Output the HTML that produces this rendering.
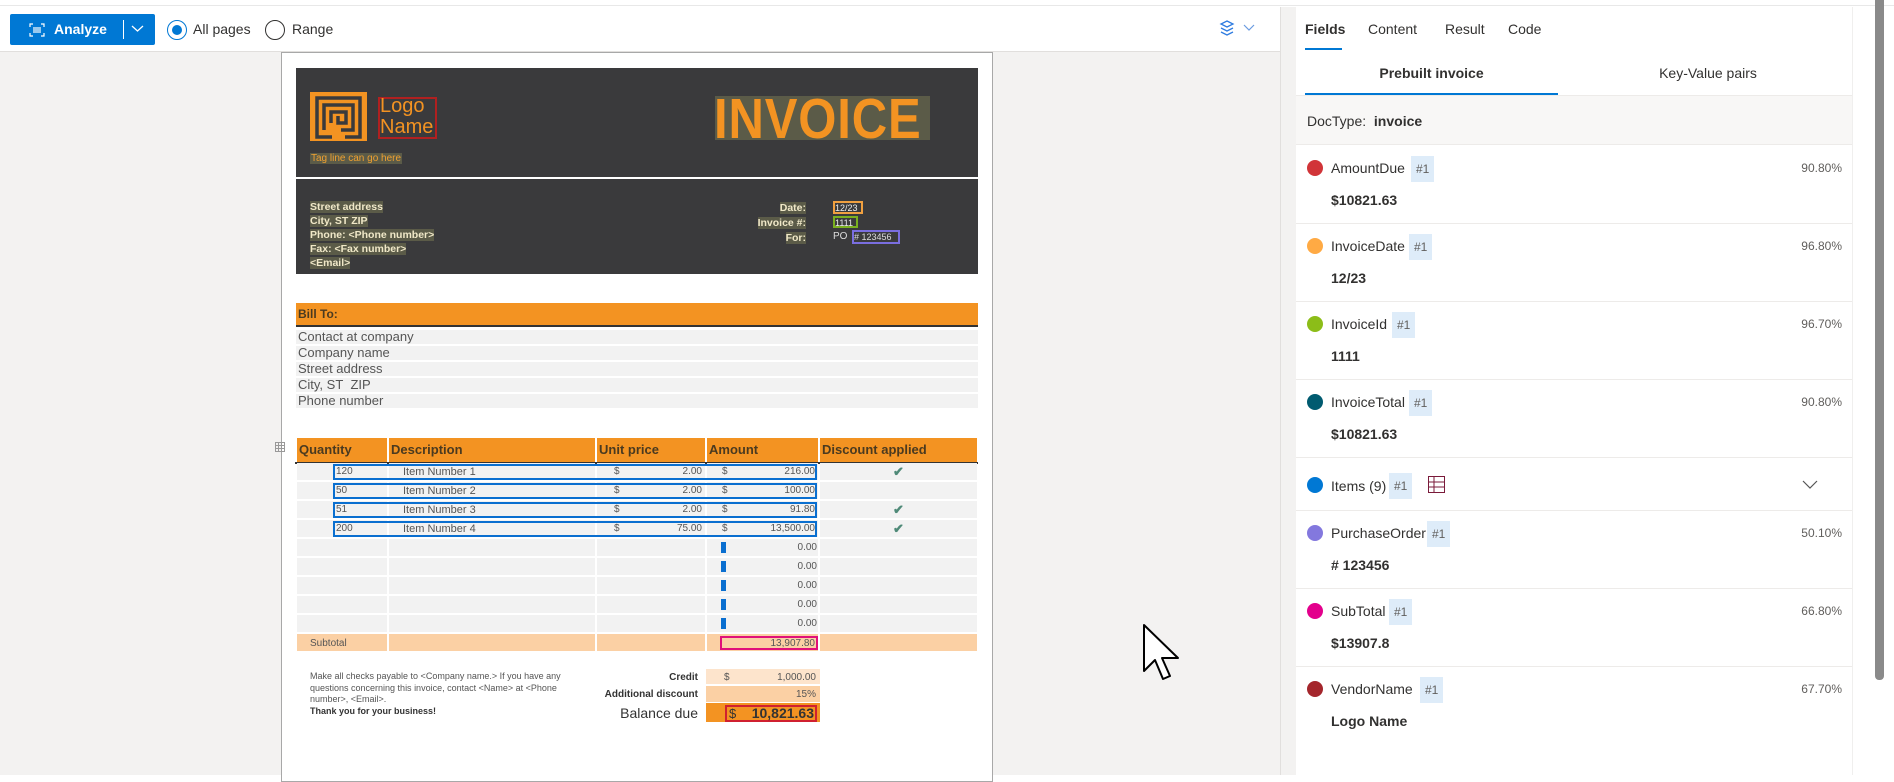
<!DOCTYPE html>
<html><head><meta charset="utf-8"><style>
*{margin:0;padding:0;box-sizing:border-box}
body{width:1894px;height:775px;overflow:hidden;background:#fff;font-family:"Liberation Sans",sans-serif;position:relative;color:#323130}
.a{position:absolute}
.hl{background:#5b5b48;color:#f0e8c8}
.cell{position:absolute;background:#f2f2f2;height:17px}
.hc{position:absolute;background:#f39322;height:24px;top:438px;font-weight:bold;font-size:13px;color:#4a3a20;padding:4px 2px}
.bx{position:absolute;border:2px solid #0a6fd0}
.tx{position:absolute;font-size:10px;color:#555}
.row{position:absolute;left:1296px;width:556px;border-bottom:1px solid #edebe9}
.dot{position:absolute;left:11px;width:16px;height:16px;border-radius:50%}
.nm{position:absolute;left:35px;font-size:14px;color:#323130}
.bd{position:absolute;background:#deecf9;font-size:12px;color:#605e5c;height:26px;line-height:26px;padding:0 5px}
.pc{position:absolute;right:10px;font-size:12px;color:#605e5c}
.vl{position:absolute;left:35px;font-size:14px;font-weight:bold;color:#323130}
</style></head><body>
<div class="a" style="left:0;top:0;width:1894px;height:6px;background:#fff;border-bottom:1px solid #e8e8e8"></div>
<div class="a" style="left:0;top:51px;width:1280px;height:724px;background:#f3f2f1;border-top:1px solid #e1dfdd"></div>
<div class="a" style="left:10px;top:14px;width:145px;height:31px;background:#0078d4;border-radius:2px;color:#fff;font-weight:bold;font-size:14px">
 <svg class="a" style="left:19px;top:9px" width="16" height="14" viewBox="0 0 16 14" fill="none" stroke="#fff" stroke-width="1.2"><path d="M1 4V1h3M12 1h3v3M15 10v3h-3M4 13H1v-3M5 4v6M7 4v6M9 4v6M11 4v6"/></svg>
 <span class="a" style="left:44px;top:7px">Analyze</span>
 <div class="a" style="left:113px;top:6px;width:1px;height:19px;background:#fff"></div>
 <svg class="a" style="left:121px;top:10px" width="13" height="9" viewBox="0 0 13 9"><path d="M1 2l5.5 5L12 2" stroke="#fff" fill="none" stroke-width="1.3"/></svg>
</div>
<div class="a" style="left:167px;top:20px;width:20px;height:20px;border:1.5px solid #0078d4;border-radius:50%"></div>
<div class="a" style="left:172px;top:25px;width:10px;height:10px;background:#0078d4;border-radius:50%"></div>
<div class="a" style="left:193px;top:21px;font-size:14px">All pages</div>
<div class="a" style="left:265px;top:20px;width:20px;height:20px;border:1.5px solid #323130;border-radius:50%"></div>
<div class="a" style="left:292px;top:21px;font-size:14px">Range</div>
<svg class="a" style="left:1219px;top:20px" width="16" height="17" viewBox="0 0 16 17" fill="none" stroke="#2f7ce0" stroke-width="1.3"><path d="M8 1l6 3-6 3-6-3z M2 8l6 3 6-3 M2 12l6 3 6-3"/></svg>
<svg class="a" style="left:1243px;top:24px" width="12" height="8" viewBox="0 0 12 8"><path d="M1 1l5 5 5-5" stroke="#6a9be0" fill="none" stroke-width="1.2"/></svg>

<div class="a" style="left:281px;top:52px;width:712px;height:730px;background:#fff;border:1px solid #a8a8a8"></div>
<div class="a" style="left:296px;top:68px;width:682px;height:109px;background:#3a3a3c"></div>
<div class="a" style="left:296px;top:179px;width:682px;height:95px;background:#3a3a3c"></div>
<div class="a" style="left:310px;top:92px;width:57px;height:49px;background:#f39322"></div>
<svg class="a" style="left:310px;top:92px" width="57" height="49" viewBox="0 0 57 49" fill="none" stroke="#3a3a3c" stroke-width="3.5"><path d="M22 45H7V6h43v39H35M14 38V13h29v25H31M21 31V20h15v11H28V24"/></svg>
<div class="a" style="left:378px;top:97px;width:59px;height:42px;border:2px solid #b02020"></div>
<div class="a" style="left:380px;top:96px;font-size:20px;color:#f39322;line-height:21px">Logo<br>Name</div>
<div class="a hl" style="left:310px;top:153px;font-size:10px;color:#f0a030;padding:0 1px">Tag line can go here</div>
<div class="a hl" style="left:715px;top:96px;width:215px;height:44px"></div>
<div class="a" style="left:714px;top:86px;font-size:57px;font-weight:bold;color:#f39322;transform:scaleX(0.86);transform-origin:left;letter-spacing:1px">INVOICE</div>
<div class="a" style="left:310px;top:200px;font-size:10.5px;font-weight:bold;color:#f0ecd8;line-height:14px">
<span class="hl">Street address</span><br><span class="hl">City, ST ZIP</span><br><span class="hl">Phone: &lt;Phone number&gt;</span><br><span class="hl">Fax: &lt;Fax number&gt;</span><br><span class="hl">&lt;Email&gt;</span></div>
<div class="a" style="left:720px;top:201px;width:86px;text-align:right;font-size:10.5px;font-weight:bold;color:#f0ecd8;line-height:15px"><span class="hl">Date:</span><br><span class="hl">Invoice #:</span><br><span class="hl">For:</span></div>
<div class="a" style="left:833px;top:201px;width:30px;height:13px;border:2px solid #f0a040;font-size:9px;color:#eee">12/23</div>
<div class="a" style="left:833px;top:216px;width:25px;height:12px;border:2px solid #7ab020;font-size:9px;color:#eee">1111</div>
<div class="a" style="left:833px;top:231px;font-size:10px;color:#ddd">PO</div>
<div class="a" style="left:852px;top:230px;width:48px;height:14px;border:2px solid #7a6ee0;font-size:9px;color:#ddd">#&nbsp;123456</div>

<div class="a" style="left:296px;top:303px;width:682px;height:24px;background:#f39322;border-bottom:2px solid #333"></div>
<div class="a" style="left:298px;top:307px;font-size:12px;font-weight:bold;color:#4a3a20">Bill To:</div>
<div class="cell" style="left:296px;top:330px;width:682px;height:14px"></div>
<div class="cell" style="left:296px;top:346px;width:682px;height:14px"></div>
<div class="cell" style="left:296px;top:362px;width:682px;height:14px"></div>
<div class="cell" style="left:296px;top:378px;width:682px;height:14px"></div>
<div class="cell" style="left:296px;top:394px;width:682px;height:14px"></div>
<div class="a" style="left:298px;top:329px;font-size:13px;color:#555;line-height:16px">Contact at company<br>Company name<br>Street address<br>City, ST&nbsp; ZIP<br>Phone number</div>

<svg class="a" style="left:275px;top:442px" width="10" height="10"><path d="M0.5 .5h9v9h-9zM0.5 3.5h9M0.5 6.5h9M3.5 .5v9M6.5 .5v9" stroke="#999" fill="none"/></svg>
<div class="hc" style="left:297px;width:90px">Quantity</div>
<div class="hc" style="left:389px;width:206px">Description</div>
<div class="hc" style="left:597px;width:108px">Unit price</div>
<div class="hc" style="left:707px;width:111px">Amount</div>
<div class="hc" style="left:820px;width:157px">Discount applied</div>
<div class="a" style="left:295px;top:462px;width:683px;height:2px;background:#333"></div>
<div id="rows"></div>
<script>
var ys=[463,482,501,520,539,558,577,596,615];var cols=[[297,90],[389,206],[597,108],[707,111],[820,157]];var h='';
ys.forEach(function(y){cols.forEach(function(c){h+='<div class="cell" style="left:'+c[0]+'px;top:'+y+'px;width:'+c[1]+'px"></div>'})});
cols.forEach(function(c){h+='<div class="cell" style="left:'+c[0]+'px;top:634px;width:'+c[1]+'px;background:#fbd0a4"></div>'});
var d=[['120','Item Number 1','2.00','216.00',1],['50','Item Number 2','2.00','100.00',0],['51','Item Number 3','2.00','91.80',1],['200','Item Number 4','75.00','13,500.00',1]];
d.forEach(function(r,i){var y=ys[i];h+='<div class="bx" style="left:333px;top:'+(y+1)+'px;width:484px;height:16px"></div>';
h+='<div class="tx" style="left:336px;top:'+(y+3)+'px">'+r[0]+'</div><div class="tx" style="left:403px;top:'+(y+3)+'px;font-size:11px">'+r[1]+'</div><div class="tx" style="left:614px;top:'+(y+3)+'px">$</div><div class="tx" style="left:640px;top:'+(y+3)+'px;width:62px;text-align:right">'+r[2]+'</div><div class="tx" style="left:722px;top:'+(y+3)+'px">$</div><div class="tx" style="left:735px;top:'+(y+3)+'px;width:80px;text-align:right">'+r[3]+'</div>';
if(r[4])h+='<div class="a" style="left:893px;top:'+(y+1)+'px;font-size:13px;color:#4f8a78;font-weight:bold">✔</div>';});
for(var i=4;i<9;i++){var y=ys[i];h+='<div class="a" style="left:721px;top:'+(y+3)+'px;width:5px;height:11px;background:#0a6fd0"></div><div class="tx" style="left:735px;top:'+(y+3)+'px;width:82px;text-align:right">0.00</div>'}
h+='<div class="tx" style="left:310px;top:638px">Subtotal</div><div class="a" style="left:720px;top:636px;width:98px;height:14px;border:2px solid #e0107a"></div><div class="tx" style="left:735px;top:638px;width:80px;text-align:right">13,907.80</div>';
document.getElementById('rows').innerHTML=h;
</script>
<div class="a" style="left:310px;top:671px;font-size:9px;color:#555;line-height:11.5px;width:272px">Make all checks payable to &lt;Company name.&gt; If you have any questions concerning this invoice, contact &lt;Name&gt; at &lt;Phone number&gt;, &lt;Email&gt;.<br><b style="color:#333">Thank you for your business!</b></div>
<div class="a" style="left:600px;top:672px;width:98px;text-align:right;font-size:10px;font-weight:bold;color:#333">Credit</div>
<div class="a" style="left:706px;top:669px;width:114px;height:15px;background:#fde4cc"></div>
<div class="tx" style="left:724px;top:672px">$</div><div class="tx" style="left:740px;top:672px;width:76px;text-align:right">1,000.00</div>
<div class="a" style="left:580px;top:689px;width:118px;text-align:right;font-size:10px;font-weight:bold;color:#333">Additional discount</div>
<div class="a" style="left:706px;top:686px;width:114px;height:16px;background:#fbd0a4"></div>
<div class="tx" style="left:740px;top:689px;width:76px;text-align:right">15%</div>
<div class="a" style="left:600px;top:705px;width:98px;text-align:right;font-size:14px;color:#333">Balance due</div>
<div class="a" style="left:706px;top:703px;width:114px;height:19px;background:#f39322"></div>
<div class="a" style="left:725px;top:705px;width:92px;height:17px;border:2px solid #d02030"></div>
<div class="a" style="left:729px;top:706px;font-size:13px;color:#333">$</div>
<div class="a" style="left:740px;top:705px;width:74px;text-align:right;font-size:14px;font-weight:bold;color:#333">10,821.63</div>

<svg class="a" style="left:1142px;top:623px" width="40" height="60" viewBox="0 0 40 60"><path d="M2 2v46l11-11 8 19 7-3-8-18h16z" fill="#fff" stroke="#000" stroke-width="2" stroke-linejoin="round"/></svg>

<div class="a" style="left:1280px;top:7px;width:16px;height:768px;background:#f3f2f1;border-left:1px solid #e1dfdd"></div>
<div class="a" style="left:1852px;top:7px;width:42px;height:768px;background:#fff;border-left:1px solid #f0efee"></div>
<div class="a" style="left:1875px;top:0;width:9px;height:680px;background:#8a8a8a;border-radius:0 0 4px 4px"></div>
<div class="a" style="left:1305px;top:21px;font-size:14px;font-weight:bold">Fields</div>
<div class="a" style="left:1368px;top:21px;font-size:14px">Content</div>
<div class="a" style="left:1445px;top:21px;font-size:14px">Result</div>
<div class="a" style="left:1508px;top:21px;font-size:14px">Code</div>
<div class="a" style="left:1305px;top:48px;width:37px;height:2px;background:#0078d4"></div>
<div class="a" style="left:1305px;top:65px;width:253px;text-align:center;font-size:14px;font-weight:bold">Prebuilt invoice</div>
<div class="a" style="left:1558px;top:65px;width:300px;text-align:center;font-size:14px">Key-Value pairs</div>
<div class="a" style="left:1305px;top:93px;width:253px;height:2px;background:#0078d4"></div>
<div class="a" style="left:1296px;top:95px;width:556px;height:50px;background:#f8f7f6;border-top:1px solid #edebe9;border-bottom:1px solid #edebe9"></div>
<div class="a" style="left:1307px;top:113px;font-size:14px">DocType:&nbsp; <b>invoice</b></div>

<div class="row" style="top:146px;height:78px"><div class="dot" style="top:14px;background:#d13438"></div><div class="nm" style="top:14px">AmountDue</div><div class="bd" style="left:115px;top:10px">#1</div><div class="pc" style="top:15px">90.80%</div><div class="vl" style="top:46px">$10821.63</div></div>
<div class="row" style="top:224px;height:78px"><div class="dot" style="top:14px;background:#ffaa44"></div><div class="nm" style="top:14px">InvoiceDate</div><div class="bd" style="left:113px;top:10px">#1</div><div class="pc" style="top:15px">96.80%</div><div class="vl" style="top:46px">12/23</div></div>
<div class="row" style="top:302px;height:78px"><div class="dot" style="top:14px;background:#8cbd18"></div><div class="nm" style="top:14px">InvoiceId</div><div class="bd" style="left:96px;top:10px">#1</div><div class="pc" style="top:15px">96.70%</div><div class="vl" style="top:46px">1111</div></div>
<div class="row" style="top:380px;height:78px"><div class="dot" style="top:14px;background:#005b70"></div><div class="nm" style="top:14px">InvoiceTotal</div><div class="bd" style="left:113px;top:10px">#1</div><div class="pc" style="top:15px">90.80%</div><div class="vl" style="top:46px">$10821.63</div></div>
<div class="row" style="top:458px;height:53px"><div class="dot" style="top:19px;background:#0078d4"></div><div class="nm" style="top:20px">Items (9)</div><div class="bd" style="left:93px;top:15px">#1</div>
<svg class="a" style="left:132px;top:18px" width="17" height="17"><path d="M.5 .5h16v16H.5zM.5 6h16M.5 11h16M6 .5v16" stroke="#7a1a3a" fill="none"/></svg>
<svg class="a" style="left:506px;top:22px" width="16" height="10"><path d="M1 1l7 7 7-7" stroke="#555" fill="none" stroke-width="1.2"/></svg></div>
<div class="row" style="top:511px;height:78px"><div class="dot" style="top:14px;background:#8378de"></div><div class="nm" style="top:14px">PurchaseOrder</div><div class="bd" style="left:131px;top:10px">#1</div><div class="pc" style="top:15px">50.10%</div><div class="vl" style="top:46px"># 123456</div></div>
<div class="row" style="top:589px;height:78px"><div class="dot" style="top:14px;background:#e3008c"></div><div class="nm" style="top:14px">SubTotal</div><div class="bd" style="left:93px;top:10px">#1</div><div class="pc" style="top:15px">66.80%</div><div class="vl" style="top:46px">$13907.8</div></div>
<div class="row" style="top:667px;height:108px;border:none"><div class="dot" style="top:14px;background:#a4262c"></div><div class="nm" style="top:14px">VendorName</div><div class="bd" style="left:124px;top:10px">#1</div><div class="pc" style="top:15px">67.70%</div><div class="vl" style="top:46px">Logo Name</div></div>
</body></html>
